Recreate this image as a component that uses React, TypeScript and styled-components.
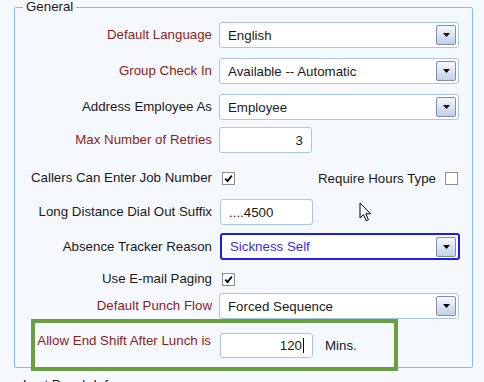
import React from "react";
import styled, { createGlobalStyle } from "styled-components";

const GlobalStyle = createGlobalStyle`
  html, body { margin: 0; padding: 0; background: #f5f8fd; }
  body {
    font-family: "Liberation Sans", Arial, sans-serif;
    font-size: 13.3px;
    color: #1a1a1a;
  }
`;

const Page = styled.div`
  position: relative;
  width: 484px;
  height: 382px;
  overflow: hidden;
  padding-left: 14px;
  box-sizing: border-box;
  background: #f5f8fd;
`;

const Group = styled.fieldset`
  margin: 0;
  padding: 0 13px 0 0;
  width: 459px;
  box-sizing: border-box;
  border: 1px solid #8cb9ea;
  border-radius: 2px;
  min-width: 0;
`;

const Legend = styled.legend`
  margin-left: 8px;
  padding: 0 3px;
  line-height: 14px;
  color: #1a1a1a;
`;

const Body = styled.div`
  display: flex;
  flex-direction: column;
`;

const Row = styled.div<{ $mt: number; $h?: number }>`
  display: flex;
  align-items: center;
  height: ${(p) => p.$h ?? 26}px;
  margin-top: ${(p) => p.$mt}px;
`;

const Label = styled.span<{ $red?: boolean; $w?: number; $gap?: number }>`
  flex: 0 0 ${(p) => p.$w ?? 197}px;
  margin-right: ${(p) => p.$gap ?? 7}px;
  text-align: right;
  white-space: nowrap;
  line-height: 16px;
  color: ${(p) => (p.$red ? "#8c1d1d" : "#1a1a1a")};
`;

const Select = styled.div<{ $focus?: boolean }>`
  flex: 1;
  height: 100%;
  box-sizing: border-box;
  display: flex;
  align-items: center;
  background: #fff;
  border: ${(p) => (p.$focus ? "2px solid #1e1ee8" : "1px solid #a9c5ea")};
  border-radius: 3px;
  padding: 0 2px 0 8px;
  margin-left: ${(p) => (p.$focus ? 1 : 0)}px;
  margin-right: ${(p) => (p.$focus ? -1 : 0)}px;
`;

const SelectText = styled.span<{ $focus?: boolean }>`
  flex: 1;
  white-space: nowrap;
  color: ${(p) => (p.$focus ? "#3b2fe0" : "#1a1a1a")};
`;

const DropButton = styled.span`
  width: 20px;
  height: 20px;
  box-sizing: border-box;
  border: 1px solid #7f8fab;
  border-radius: 2px;
  background: linear-gradient(#f6f8fd, #c4cee6);
  display: flex;
  align-items: center;
  justify-content: center;
`;

const TextBox = styled.div<{ $right?: boolean; $shift?: number }>`
  width: 93px;
  height: 100%;
  box-sizing: border-box;
  display: flex;
  align-items: center;
  justify-content: ${(p) => (p.$right ? "flex-end" : "flex-start")};
  background: #fff;
  border: 1px solid #a9c5ea;
  border-radius: 3px;
  padding: 0 8px;
  margin-left: ${(p) => p.$shift ?? 0}px;
  white-space: nowrap;
`;

const Caret = styled.span`
  width: 1px;
  height: 15px;
  background: #000;
  margin-left: 1px;
`;

const Check = styled.span<{ $ml?: number }>`
  width: 13px;
  height: 13px;
  box-sizing: border-box;
  border: 1px solid #8e8f8f;
  background: #fff;
  display: flex;
  align-items: center;
  justify-content: center;
  margin-left: ${(p) => p.$ml ?? 3}px;
`;

const RightGroup = styled.div`
  margin-left: auto;
  margin-right: 1px;
  display: flex;
  align-items: center;
`;

const Highlight = styled.div`
  position: relative;
  margin: 0 0 -4px 16px;
  width: 367px;
  height: 52px;
  box-sizing: border-box;
  border: 4px solid #6aa03f;
  display: flex;
  align-items: flex-start;
  padding-top: 10px;
`;

const HighlightInput = styled(TextBox)`
  height: 25px;
`;

const Unit = styled.span`
  margin-left: 12px;
  line-height: 25px;
  color: #1a1a1a;
`;

const Footer = styled.div`
  margin: 9px 0 0 9px;
  line-height: 15px;
  color: #1a1a1a;
`;

const Pointer = styled.svg`
  position: absolute;
  left: 359px;
  top: 202px;
`;

const Triangle = () => (
  <svg width="7" height="4" viewBox="0 0 7 4">
    <polygon points="0,0 7,0 3.5,4" fill="#000" />
  </svg>
);

const Tick = () => (
  <svg width="9" height="9" viewBox="0 0 9 9">
    <path d="M1.3 4.6 L3.6 7.1 L7.8 1.6" fill="none" stroke="#000" strokeWidth="1.8" />
  </svg>
);

const Dropdown = ({ value, focus }: { value: string; focus?: boolean }) => (
  <Select $focus={focus}>
    <SelectText $focus={focus}>{value}</SelectText>
    <DropButton>
      <Triangle />
    </DropButton>
  </Select>
);

export default function App() {
  return (
    <>
      <GlobalStyle />
      <Page>
        <Group>
          <Legend>General</Legend>
          <Body>
            <Row $mt={8}>
              <Label $red>Default Language</Label>
              <Dropdown value="English" />
            </Row>
            <Row $mt={10}>
              <Label $red>Group Check In</Label>
              <Dropdown value="Available -- Automatic" />
            </Row>
            <Row $mt={10}>
              <Label>Address Employee As</Label>
              <Dropdown value="Employee" />
            </Row>
            <Row $mt={7}>
              <Label $red>Max Number of Retries</Label>
              <TextBox $right>3</TextBox>
            </Row>
            <Row $mt={12}>
              <Label>Callers Can Enter Job Number</Label>
              <Check>
                <Tick />
              </Check>
              <RightGroup>
                <span>Require Hours Type</span>
                <Check $ml={9} />
              </RightGroup>
            </Row>
            <Row $mt={8}>
              <Label>Long Distance Dial Out Suffix</Label>
              <TextBox $shift={1}>....4500</TextBox>
            </Row>
            <Row $mt={8} $h={27}>
              <Label>Absence Tracker Reason</Label>
              <Dropdown value="Sickness Self" focus />
            </Row>
            <Row $mt={6}>
              <Label>Use E-mail Paging</Label>
              <Check>
                <Tick />
              </Check>
            </Row>
            <Row $mt={1}>
              <Label $red>Default Punch Flow</Label>
              <Dropdown value="Forced Sequence" />
            </Row>
            <Highlight>
              <Label $red $w={176} $gap={9}>
                Allow End Shift After Lunch is
              </Label>
              <HighlightInput $right>
                120
                <Caret />
              </HighlightInput>
              <Unit>Mins.</Unit>
            </Highlight>
          </Body>
        </Group>
        <Footer>Last Punch Info</Footer>
        <Pointer width="13" height="21" viewBox="0 0 13 21">
          <path
            d="M1 1 L1 16 L4.5 12.6 L7.2 18.8 L9.4 17.8 L6.8 11.8 L11.6 11.8 Z"
            fill="#fff"
            stroke="#000"
            strokeWidth="1"
            strokeLinejoin="round"
          />
        </Pointer>
      </Page>
    </>
  );
}
